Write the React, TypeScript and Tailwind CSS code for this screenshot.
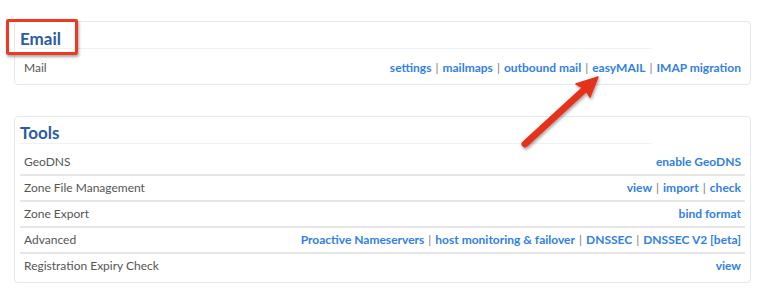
import React from 'react';

interface Row {
  label: string;
  links: string[];
}

const toolRows: Row[] = [
  { label: 'GeoDNS', links: ['enable GeoDNS'] },
  { label: 'Zone File Management', links: ['view', 'import', 'check'] },
  { label: 'Zone Export', links: ['bind format'] },
  { label: 'Advanced', links: ['Proactive Nameservers', 'host monitoring & failover', 'DNSSEC', 'DNSSEC V2 [beta]'] },
  { label: 'Registration Expiry Check', links: ['view'] },
];

const Links: React.FC<{ links: string[] }> = ({ links }) => (
  <div className="flex items-center">
    {links.map((link, i) => (
      <React.Fragment key={link}>
        {i > 0 && <span className="px-[4px] text-[#7a7a7a] font-normal">|</span>}
        <a href="#" className="font-bold text-[#3180e4]">
          {link}
        </a>
      </React.Fragment>
    ))}
  </div>
);

const App: React.FC = () => {
  return (
    <div
      className="relative w-[768px] h-[303px] bg-white text-[12px] leading-[16px] text-[#555]"
      style={{ fontFamily: 'Lato, "Open Sans", sans-serif' }}
    >
      <div className="pt-[21px] pl-[14px] flex flex-col gap-[31px]">
        {/* Email */}
        <div className="w-[737px] border border-[#e3e9f1] rounded-[4px] px-[5px]">
          <div className="w-[632px] h-[27px] pt-[7px] border-b border-[#eef1f5]">
            <h2 className="text-[17px] leading-[20px] font-bold text-[#2b5c9f]">Email</h2>
          </div>
          <div className="flex justify-between px-[4px] pt-[11px] pb-[8px]">
            <span>Mail</span>
            <Links links={['settings', 'mailmaps', 'outbound mail', 'easyMAIL', 'IMAP migration']} />
          </div>
        </div>

        {/* Tools */}
        <div className="w-[737px] border border-[#e3e9f1] rounded-[4px] px-[5px] pb-[4px]">
          <div className="w-[632px] h-[27px] pt-[6px] border-b border-[#eef1f5]">
            <h2 className="text-[17px] leading-[20px] font-bold text-[#2b5c9f]">Tools</h2>
          </div>
          <div className="pt-[6px]">
            {toolRows.map((row, i) => (
              <div
                key={row.label}
                className={`flex justify-between px-[4px] py-[4px] ${
                  i < toolRows.length - 1 ? 'border-b-2 border-[#e6e6e6]' : ''
                }`}
              >
                <span>{row.label}</span>
                <Links links={row.links} />
              </div>
            ))}
          </div>
        </div>
      </div>

      {/* highlight box */}
      <div className="absolute left-[6px] top-[19px] w-[72px] h-[36px] border-[3px] border-[#ec3a22] rounded-[2px] shadow-[1px_2px_3px_rgba(0,0,0,0.35)]" />

      {/* arrow */}
      <svg className="absolute left-[510px] top-[65px]" width="100" height="95" viewBox="0 0 100 95">
        <defs>
          <filter id="sh" x="-20%" y="-20%" width="140%" height="140%">
            <feDropShadow dx="1" dy="2" stdDeviation="1.5" floodColor="#000" floodOpacity="0.35" />
          </filter>
        </defs>
        <g filter="url(#sh)" fill="#e4321c" stroke="#e4321c">
          <line x1="15" y1="79" x2="75" y2="24" strokeWidth="7" strokeLinecap="round" />
          <polygon points="88,12 80,32 75,24 66,19" strokeWidth="1.5" strokeLinejoin="round" />
        </g>
      </svg>
    </div>
  );
};

export default App;
